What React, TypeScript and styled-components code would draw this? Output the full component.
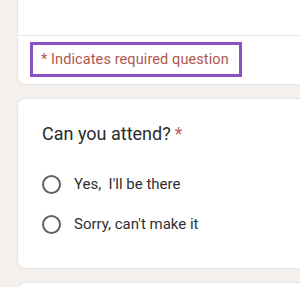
import React from "react";
import styled, { createGlobalStyle } from "styled-components";

const Global = createGlobalStyle`
  html, body { margin: 0; padding: 0; }
  body {
    background: #f3f0ed;
    font-family: Roboto, "Liberation Sans", Arial, sans-serif;
    width: 300px;
    height: 287px;
    overflow: hidden;
  }
`;

const Page = styled.div`
  display: flex;
  flex-direction: column;
  gap: 13px;
  padding-left: 17px;
  margin-top: -20px;
`;

const Card = styled.div`
  background: #fff;
  border: 1px solid #e9e4df;
  border-right: none;
  border-radius: 8px 0 0 8px;
`;

const Header = styled.div`
  height: 54px;
  border-bottom: 1px solid #ece8e4;
`;

const Notice = styled.div`
  padding: 6px 0 7px 12px;
`;

const Highlight = styled.div`
  display: inline-flex;
  align-items: center;
  box-sizing: border-box;
  width: 212px;
  height: 35px;
  border: 3px solid #8c51c6;
  padding-left: 8px;
  color: #b0574e;
  font-size: 14.5px;
  letter-spacing: 0.1px;
`;

const Question = styled.div`
  padding: 24px 0 24px 24px;
  display: flex;
  flex-direction: column;
`;

const Title = styled.div`
  font-size: 18px;
  color: #2a2a2a;
  margin-bottom: 20px;
  span { color: #c0625a; margin-left: 4px; }
`;

const Option = styled.label`
  display: flex;
  align-items: center;
  gap: 13px;
  height: 40px;
  font-size: 15px;
  color: #303030;
`;

const Radio = styled.span`
  box-sizing: border-box;
  width: 19px;
  height: 19px;
  border: 2px solid #5f6165;
  border-radius: 50%;
  flex: none;
`;

const Bottom = styled(Card)`
  height: 40px;
`;

export default function App() {
  return (
    <>
      <Global />
      <Page>
        <Card>
          <Header />
          <Notice>
            <Highlight>* Indicates required question</Highlight>
          </Notice>
        </Card>
        <Card>
          <Question>
            <Title>
              Can you attend?<span>*</span>
            </Title>
            <Option>
              <Radio />
              Yes,&nbsp; I'll be there
            </Option>
            <Option>
              <Radio />
              Sorry, can't make it
            </Option>
          </Question>
        </Card>
        <Bottom />
      </Page>
    </>
  );
}
